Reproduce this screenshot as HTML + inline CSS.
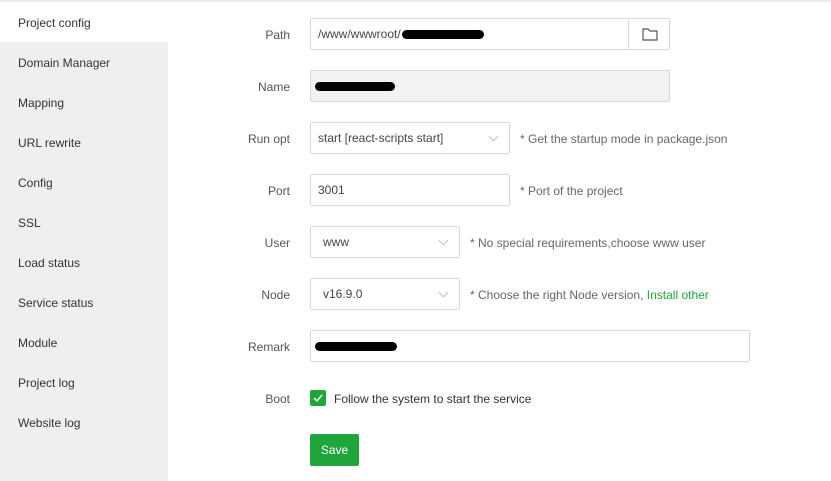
<!DOCTYPE html><html><head><style>
body{margin:0;width:831px;height:481px;font-family:"Liberation Sans",sans-serif;font-size:12px;color:#333;background:#fff;position:relative;overflow:hidden}
.top{position:absolute;left:0;top:0;width:831px;height:2px;background:#ececec}
.side{position:absolute;left:0;top:2px;width:168px;height:479px;background:#efefef}
.it{position:absolute;left:18px;color:#333}
.act{position:absolute;left:0;top:2px;width:168px;height:40px;background:#fff}
.lb{position:absolute;right:541px;text-align:right;color:#555}
.in{position:absolute;box-sizing:border-box;border:1px solid #d9d9d9;border-radius:2px;height:32px;line-height:31px;padding-left:7px;background:#fff;color:#444}
.hint{position:absolute;color:#666}
.chev{position:absolute;right:12px;top:10px;width:6px;height:6px;border-right:1px solid #c4c4c4;border-bottom:1px solid #c4c4c4;transform:rotate(45deg)}
.blot{position:absolute;height:9px;background:#000;border-radius:5px}
</style></head><body>
<div class="top"></div><div class="side"></div><div class="act"></div>
<div class="it" style="top:16px">Project config</div>
<div class="it" style="top:56px">Domain Manager</div>
<div class="it" style="top:96px">Mapping</div>
<div class="it" style="top:136px">URL rewrite</div>
<div class="it" style="top:176px">Config</div>
<div class="it" style="top:216px">SSL</div>
<div class="it" style="top:256px">Load status</div>
<div class="it" style="top:296px">Service status</div>
<div class="it" style="top:336px">Module</div>
<div class="it" style="top:376px">Project log</div>
<div class="it" style="top:416px">Website log</div>

<div class="lb" style="top:28px">Path</div>
<div class="in" style="left:310px;top:18px;width:360px">/www/wwwroot/</div>
<div class="blot" style="left:402px;top:30px;width:82px"></div>
<div style="position:absolute;left:628px;top:18px;width:42px;height:32px;box-sizing:border-box;border:1px solid #d9d9d9;border-radius:0 2px 2px 0;background:#fff">
<svg width="42" height="30" viewBox="0 0 42 30"><path d="M14 10h5l2 2h7v9H14z" fill="none" stroke="#555" stroke-width="1.2"/></svg></div>

<div class="lb" style="top:80px">Name</div>
<div class="in" style="left:310px;top:70px;width:360px;background:#f2f2f2"></div>
<div class="blot" style="left:315px;top:82px;width:80px"></div>

<div class="lb" style="top:132px">Run opt</div>
<div class="in" style="left:310px;top:122px;width:200px">start [react-scripts start]<div class="chev"></div></div>
<div class="hint" style="left:520px;top:132px">* Get the startup mode in package.json</div>

<div class="lb" style="top:184px">Port</div>
<div class="in" style="left:310px;top:174px;width:200px">3001</div>
<div class="hint" style="left:520px;top:184px">* Port of the project</div>

<div class="lb" style="top:236px">User</div>
<div class="in" style="left:310px;top:226px;width:150px;padding-left:12px">www<div class="chev"></div></div>
<div class="hint" style="left:470px;top:236px">* No special requirements,choose www user</div>

<div class="lb" style="top:288px">Node</div>
<div class="in" style="left:310px;top:278px;width:150px;padding-left:12px">v16.9.0<div class="chev"></div></div>
<div class="hint" style="left:470px;top:288px">* Choose the right Node version, <span style="color:#20a53a">Install other</span></div>

<div class="lb" style="top:340px">Remark</div>
<div class="in" style="left:310px;top:330px;width:440px"></div>
<div class="blot" style="left:315px;top:342px;width:82px"></div>

<div class="lb" style="top:392px">Boot</div>
<div style="position:absolute;left:310px;top:390px;width:16px;height:16px;background:#20a53a;border-radius:2px">
<svg width="16" height="16"><path d="M4 8l3 3 5-6" fill="none" stroke="#fff" stroke-width="1.5"/></svg></div>
<div style="position:absolute;left:334px;top:392px">Follow the system to start the service</div>

<div style="position:absolute;left:310px;top:434px;width:49px;height:32px;background:#20a53a;border-radius:2px;color:#fff;text-align:center;line-height:32px">Save</div>
</body></html>
